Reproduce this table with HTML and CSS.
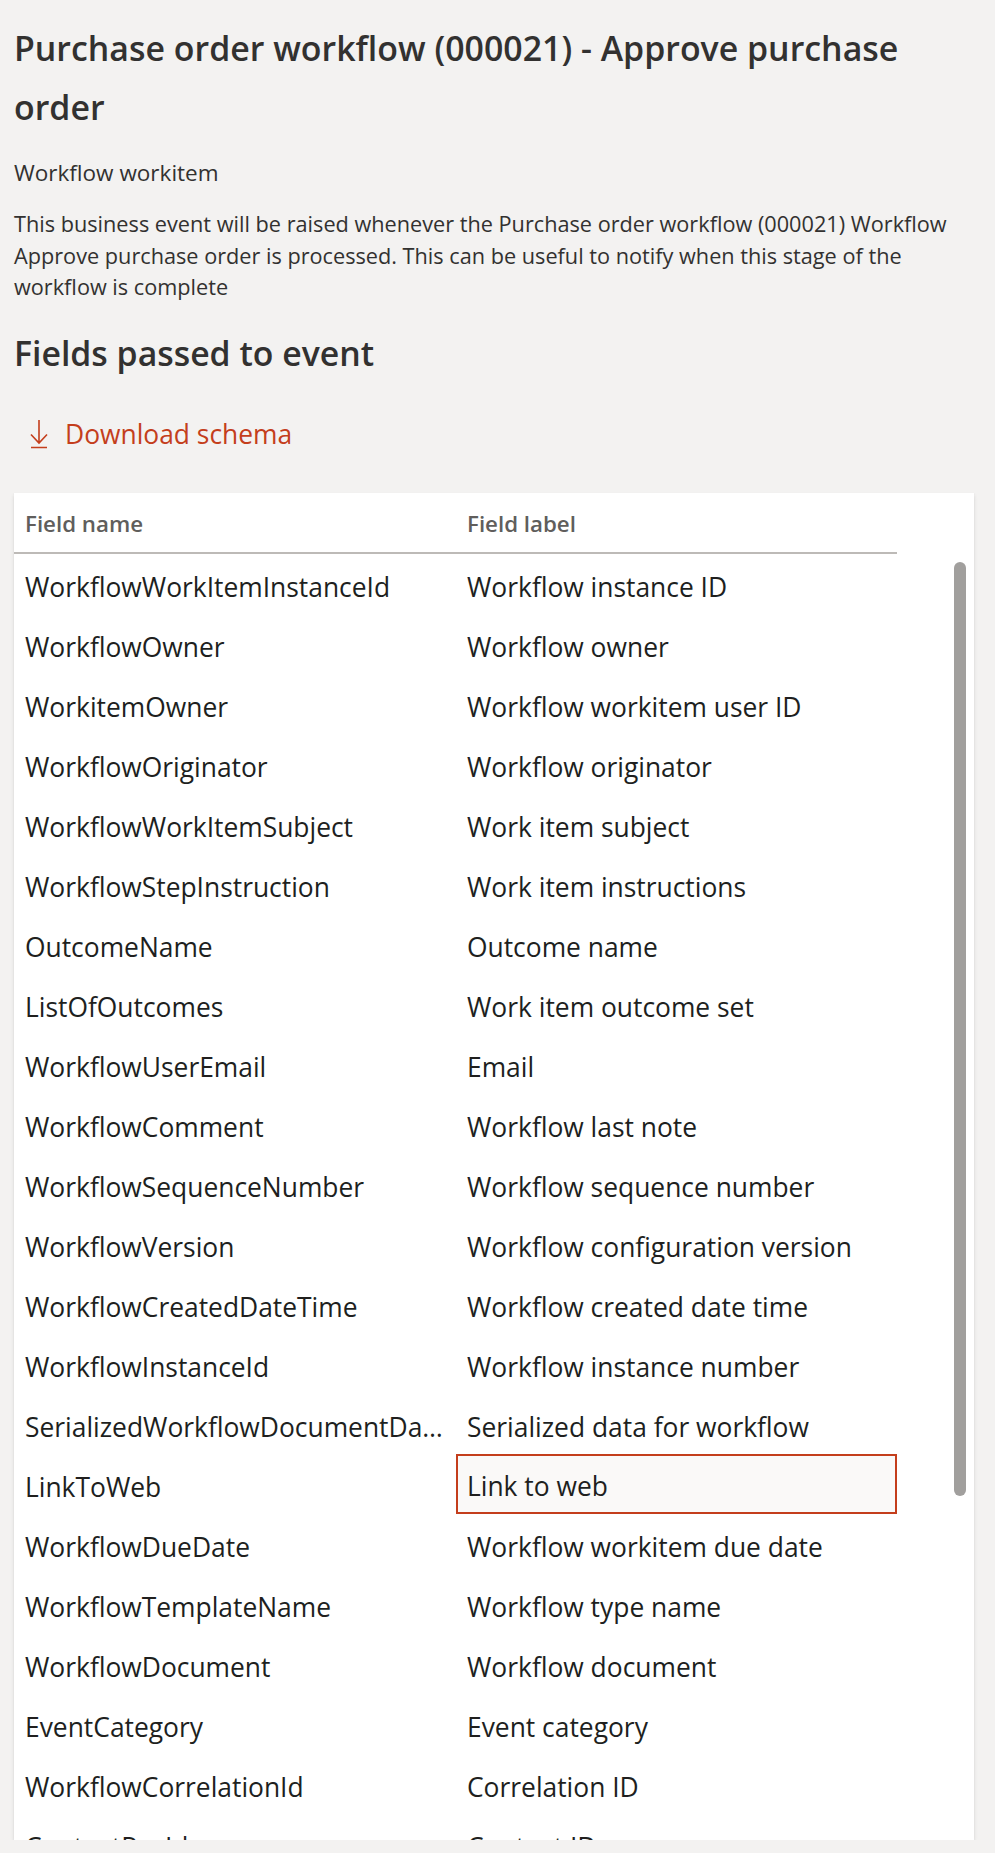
FILE: index.html
```html
<!DOCTYPE html>
<html lang="en">
<head>
<meta charset="utf-8">
<title>Purchase order workflow (000021) - Approve purchase order</title>
<link rel="stylesheet" href="styles.css">
</head>
<body>
<main class="page">
  <h1 class="title">Purchase order workflow (000021) - Approve purchase order</h1>
  <p class="category">Workflow workitem</p>
  <p class="desc">This business event will be raised whenever the Purchase order workflow (000021) Workflow Approve purchase order is processed. This can be useful to notify when this stage of the workflow is complete</p>
  <h2 class="section">Fields passed to event</h2>
  <a class="download" href="#">
    <svg class="download-icon" width="22" height="32" viewBox="0 0 22 32" aria-hidden="true">
      <path d="M11 2 V25 M3 16.5 L11 25 L19 16.5 M3 29.5 H19" fill="none" stroke="currentColor" stroke-width="1.6"/>
    </svg>
    <span>Download schema</span>
  </a>
  <section class="card">
    <div class="grid">
      <div class="cell head">Field name</div><div class="cell head">Field label</div>
      <div class="cell">WorkflowWorkItemInstanceId</div><div class="cell">Workflow instance ID</div>
      <div class="cell">WorkflowOwner</div><div class="cell">Workflow owner</div>
      <div class="cell">WorkitemOwner</div><div class="cell">Workflow workitem user ID</div>
      <div class="cell">WorkflowOriginator</div><div class="cell">Workflow originator</div>
      <div class="cell">WorkflowWorkItemSubject</div><div class="cell">Work item subject</div>
      <div class="cell">WorkflowStepInstruction</div><div class="cell">Work item instructions</div>
      <div class="cell">OutcomeName</div><div class="cell">Outcome name</div>
      <div class="cell">ListOfOutcomes</div><div class="cell">Work item outcome set</div>
      <div class="cell">WorkflowUserEmail</div><div class="cell">Email</div>
      <div class="cell">WorkflowComment</div><div class="cell">Workflow last note</div>
      <div class="cell">WorkflowSequenceNumber</div><div class="cell">Workflow sequence number</div>
      <div class="cell">WorkflowVersion</div><div class="cell">Workflow configuration version</div>
      <div class="cell">WorkflowCreatedDateTime</div><div class="cell">Workflow created date time</div>
      <div class="cell">WorkflowInstanceId</div><div class="cell">Workflow instance number</div>
      <div class="cell">SerializedWorkflowDocumentData</div><div class="cell">Serialized data for workflow</div>
      <div class="cell">LinkToWeb</div><div class="cell selected">Link to web</div>
      <div class="cell">WorkflowDueDate</div><div class="cell">Workflow workitem due date</div>
      <div class="cell">WorkflowTemplateName</div><div class="cell">Workflow type name</div>
      <div class="cell">WorkflowDocument</div><div class="cell">Workflow document</div>
      <div class="cell">EventCategory</div><div class="cell">Event category</div>
      <div class="cell">WorkflowCorrelationId</div><div class="cell">Correlation ID</div>
      <div class="cell">ContextRecId</div><div class="cell">Context ID</div>
    </div>
    <div class="scrollbar"></div>
  </section>
</main>
</body>
</html>
```

FILE: styles.css
```css
html, body {
  margin: 0;
  padding: 0;
  background: #f3f2f1;
}

body {
  font-family: "Open Sans", "Noto Sans", sans-serif;
  color: #323130;
}

.page {
  padding: 19px 8px 0 14px;
}

.title {
  margin: 0;
  font-size: 33.9px;
  font-weight: 600;
  line-height: 59px;
  color: #323130;
}

.category {
  margin: 20px 0 0 0;
  font-size: 22.5px;
  line-height: 32px;
}

.desc {
  margin: 19px 0 0 0;
  font-size: 21.7px;
  line-height: 31.5px;
}

.section {
  margin: 30px 0 0 0;
  font-size: 33.8px;
  font-weight: 600;
  line-height: 40px;
}

.download {
  display: flex;
  align-items: center;
  gap: 15px;
  margin: 41px 0 0 14px;
  height: 40px;
  color: #c43e1c;
  text-decoration: none;
  font-size: 26.4px;
  line-height: 40px;
}

.download-icon {
  flex: none;
}

.card {
  position: relative;
  margin-top: 39px;
  width: 960px;
  height: 1347px;
  background: #ffffff;
  overflow: hidden;
  box-shadow: 0 1.6px 3.6px rgba(0, 0, 0, 0.13), 0 0.3px 0.9px rgba(0, 0, 0, 0.11);
}

.grid {
  display: grid;
  grid-template-columns: 442px 441px;
  grid-template-rows: 61px;
  grid-auto-rows: 60px;
}

.cell {
  display: block;
  padding: 7px 12px 0 11px;
  line-height: 53px;
  font-size: 26.4px;
  color: #201f1e;
  white-space: nowrap;
  overflow: hidden;
  text-overflow: ellipsis;
  min-width: 0;
  box-sizing: border-box;
}

.cell.head {
  line-height: 59px;
  height: 61px;
  padding-top: 1px;
  font-size: 22.3px;
  font-weight: 600;
  color: #605e5c;
  border-bottom: 2px solid #bdbab7;
}

.cell.selected {
  border: 2px solid #c43e1c;
  background: #faf9f8;
  padding-top: 5px;
  padding-left: 9px;
  line-height: 51px;
}

.scrollbar {
  position: absolute;
  top: 69px;
  left: 940px;
  width: 12px;
  height: 934px;
  border-radius: 6px;
  background: #a19f9d;
}
```
